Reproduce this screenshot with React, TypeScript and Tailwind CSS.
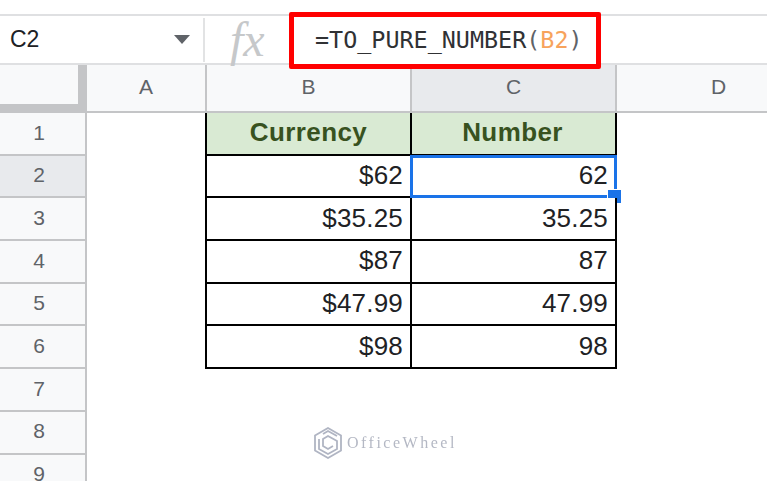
import React from 'react';

const rows = [
  { n: 1, b: 'Currency', c: 'Number', head: true },
  { n: 2, b: '$62', c: '62', active: true },
  { n: 3, b: '$35.25', c: '35.25' },
  { n: 4, b: '$87', c: '87' },
  { n: 5, b: '$47.99', c: '47.99' },
  { n: 6, b: '$98', c: '98' },
  { n: 7 },
  { n: 8 },
  { n: 9 },
];

export default function App() {
  return (
    <div className="relative h-[481px] w-[767px] overflow-hidden bg-white font-['Liberation_Sans',Arial,sans-serif]">
      <div className="h-[14px]" />
      {/* name box + formula bar */}
      <div className="relative flex h-[51px] items-center border-t-2 border-b-2 border-[#dfe0e2]">
        <div className="flex h-[44px] w-[205px] items-center border-r-2 border-[#e2e3e4] pr-[13px] pl-[10px]">
          <span className="flex-1 text-[23px] text-[#202124]">C2</span>
          <svg width="16" height="9" viewBox="0 0 16 9">
            <path d="M0 0h16L8 9z" fill="#5f6368" />
          </svg>
        </div>
        <span className="ml-[25px] font-['Liberation_Serif',serif] text-[48px] leading-none text-[#c6c8ca] italic">
          fx
        </span>
        <div className="absolute top-[-4px] left-[289px] flex h-[57px] w-[312px] items-center rounded-[2px] border-[5px] border-[#ff0000] bg-white pl-[21px] font-['DejaVu_Sans_Mono',monospace] text-[23.4px] text-[#303134]">
          =TO_PURE_NUMBER<span className="text-[#5f6368]">(</span>
          <span className="text-[#f7a35c]">B2</span>
          <span className="text-[#5f6368]">)</span>
        </div>
      </div>

      {/* sheet grid */}
      <div className="grid grid-cols-[87px_118px_205px_207px_203px] auto-rows-[42.7px] grid-rows-[48px]">
        <div className="border-r-[9px] border-b-[9px] border-[#c4c5c7] bg-[#f8f9fa]" />
        <div className="flex items-center justify-center border-b-2 border-[#c4c5c7] bg-[#f8f9fa] pb-[2px] text-[21px] text-[#5f6368]">
          A
        </div>
        <div className="flex items-center justify-center border-b-2 border-l-2 border-[#c4c5c7] bg-[#f8f9fa] pb-[2px] text-[21px] text-[#5f6368]">
          B
        </div>
        <div className="flex items-center justify-center border-b-2 border-l-2 border-[#c4c5c7] bg-[#e8eaed] pr-[2px] pb-[2px] text-[21px] text-[#5f6368]">
          C
        </div>
        <div className="-ml-[2px] flex w-[205px] items-center justify-center border-b-2 border-l-2 border-[#c4c5c7] bg-[#f8f9fa] pb-[2px] text-[21px] text-[#5f6368]">
          D
        </div>

        {rows.map((r) => (
          <React.Fragment key={r.n}>
            <div
              className={`flex items-center justify-center border-r-2 border-b-2 border-[#c4c5c7] pr-[7px] pb-[2px] text-[21px] text-[#5f6368] ${
                r.active ? 'bg-[#e8eaed]' : 'bg-[#f8f9fa]'
              }`}
            >
              {r.n}
            </div>
            <div />
            {r.b ? (
              <>
                <div
                  className={`flex items-center border-b-2 border-l-2 border-black pb-[1px] ${
                    r.head
                      ? 'justify-center bg-[#d9ead3] text-[26px] font-bold tracking-[0.4px] text-[#38521f]'
                      : 'justify-end bg-white pr-[7px] text-[26px] tracking-[0.2px] text-[#202124]'
                  }`}
                >
                  {r.b}
                </div>
                <div
                  className={`relative flex items-center border-r-2 border-b-2 border-l-2 border-black pb-[1px] ${
                    r.head
                      ? 'justify-center bg-[#d9ead3] pr-[2px] text-[26px] font-bold tracking-[0.4px] text-[#38521f]'
                      : 'justify-end bg-white pr-[7px] text-[26px] tracking-[0.2px] text-[#202124]'
                  }`}
                >
                  {r.c}
                  {r.active && (
                    <>
                      <div className="absolute -top-[1px] -right-[2px] -bottom-[2px] -left-[2px] border-[3px] border-[#1a73e8]" />
                      <div className="absolute -right-[7px] -bottom-[8px] h-[15px] w-[15px] border border-white bg-[#1a73e8]" />
                    </>
                  )}
                </div>
              </>
            ) : (
              <>
                <div />
                <div />
              </>
            )}
            <div />
          </React.Fragment>
        ))}
      </div>

      {/* watermark */}
      <div className="absolute top-[427px] left-[313px] flex items-center gap-[4px] text-[#b4b8c4] blur-[0.4px]">
        <svg width="30" height="32" viewBox="0 0 30 32" fill="none" stroke="#b0b5c3" strokeWidth="1.8">
          <path d="M15 1 28 8.5v15L15 31 2 23.5v-15z" />
          <path d="M6 12v10l9 5 9-5v-8l-9-5-5 3v7l5 3 5-3" />
          <path d="M10 7l5-3 9 5" />
        </svg>
        <span className="font-['Liberation_Serif',serif] text-[16px] tracking-[2.5px]">OfficeWheel</span>
      </div>
    </div>
  );
}
